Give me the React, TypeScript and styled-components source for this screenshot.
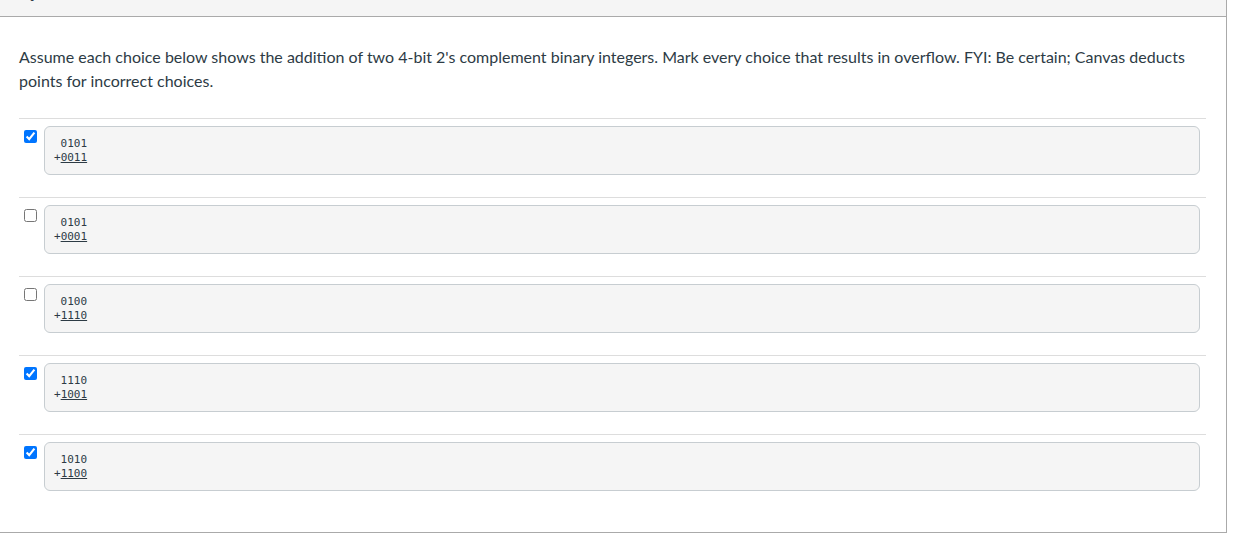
import React from "react";
import styled, { createGlobalStyle } from "styled-components";

const GlobalStyle = createGlobalStyle`
  html, body {
    margin: 0;
    padding: 0;
    background: #ffffff;
  }
  body {
    font-family: Lato, "Helvetica Neue", Arial, sans-serif;
    color: #2d3b45;
  }
`;

const QuestionFrame = styled.div`
  width: 1226px;
  margin: -1px 0 0 -1px;
  border: 1px solid #aaaaaa;
  background: #ffffff;
  box-sizing: content-box;
`;

const Header = styled.div`
  height: 16px;
  overflow: hidden;
  background: #f5f5f5;
  border-bottom: 1px solid #aaaaaa;
  padding: 0 20px 0 21px;
`;

const HeaderRow = styled.div`
  display: flex;
  justify-content: space-between;
  margin-top: -15px;
  font-size: 16px;
  line-height: 16px;
  font-weight: 700;
`;

const Points = styled.span`
  font-size: 14px;
  font-weight: 400;
`;

const Body = styled.div`
  padding: 28px 20px 19px 19px;
`;

const Prompt = styled.p`
  margin: 0 0 25px 0;
  font-size: 16px;
  line-height: 24px;
`;

const AnswerRow = styled.div`
  display: flex;
  align-items: flex-start;
  border-top: 1px solid #dddddd;
  padding: 7px 0 22px 0;
`;

const Check = styled.input`
  width: 13px;
  height: 13px;
  margin: 4px 7px 0 5px;
  flex: none;
`;

const CodeBox = styled.pre`
  flex: 1;
  margin: 0 6px 0 0;
  padding: 10px 9px 9px 9px;
  background: #f5f5f5;
  border: 1px solid #c7cdd1;
  border-radius: 6px;
  font-family: "DejaVu Sans Mono", "Liberation Mono", monospace;
  font-size: 11px;
  line-height: 14px;
  color: #2d3b45;
`;

const Operand = styled.u`
  text-decoration-thickness: 1px;
`;

type Choice = { a: string; b: string; checked: boolean };

const choices: Choice[] = [
  { a: "0101", b: "0011", checked: true },
  { a: "0101", b: "0001", checked: false },
  { a: "0100", b: "1110", checked: false },
  { a: "1110", b: "1001", checked: true },
  { a: "1010", b: "1100", checked: true },
];

export default function App() {
  return (
    <>
      <GlobalStyle />
      <QuestionFrame>
        <Header>
          <HeaderRow>
            <span>Question 4</span>
            <Points>1 pts</Points>
          </HeaderRow>
        </Header>
        <Body>
          <Prompt>
            Assume each choice below shows the addition of two 4-bit 2's
            complement binary integers. Mark every choice that results in
            overflow. FYI: Be certain; Canvas deducts points for incorrect
            choices.
          </Prompt>
          {choices.map((c, i) => (
            <AnswerRow key={i}>
              <Check type="checkbox" defaultChecked={c.checked} />
              <CodeBox>
                {" " + c.a}
                {"\n+"}
                <Operand>{c.b}</Operand>
              </CodeBox>
            </AnswerRow>
          ))}
        </Body>
      </QuestionFrame>
    </>
  );
}
